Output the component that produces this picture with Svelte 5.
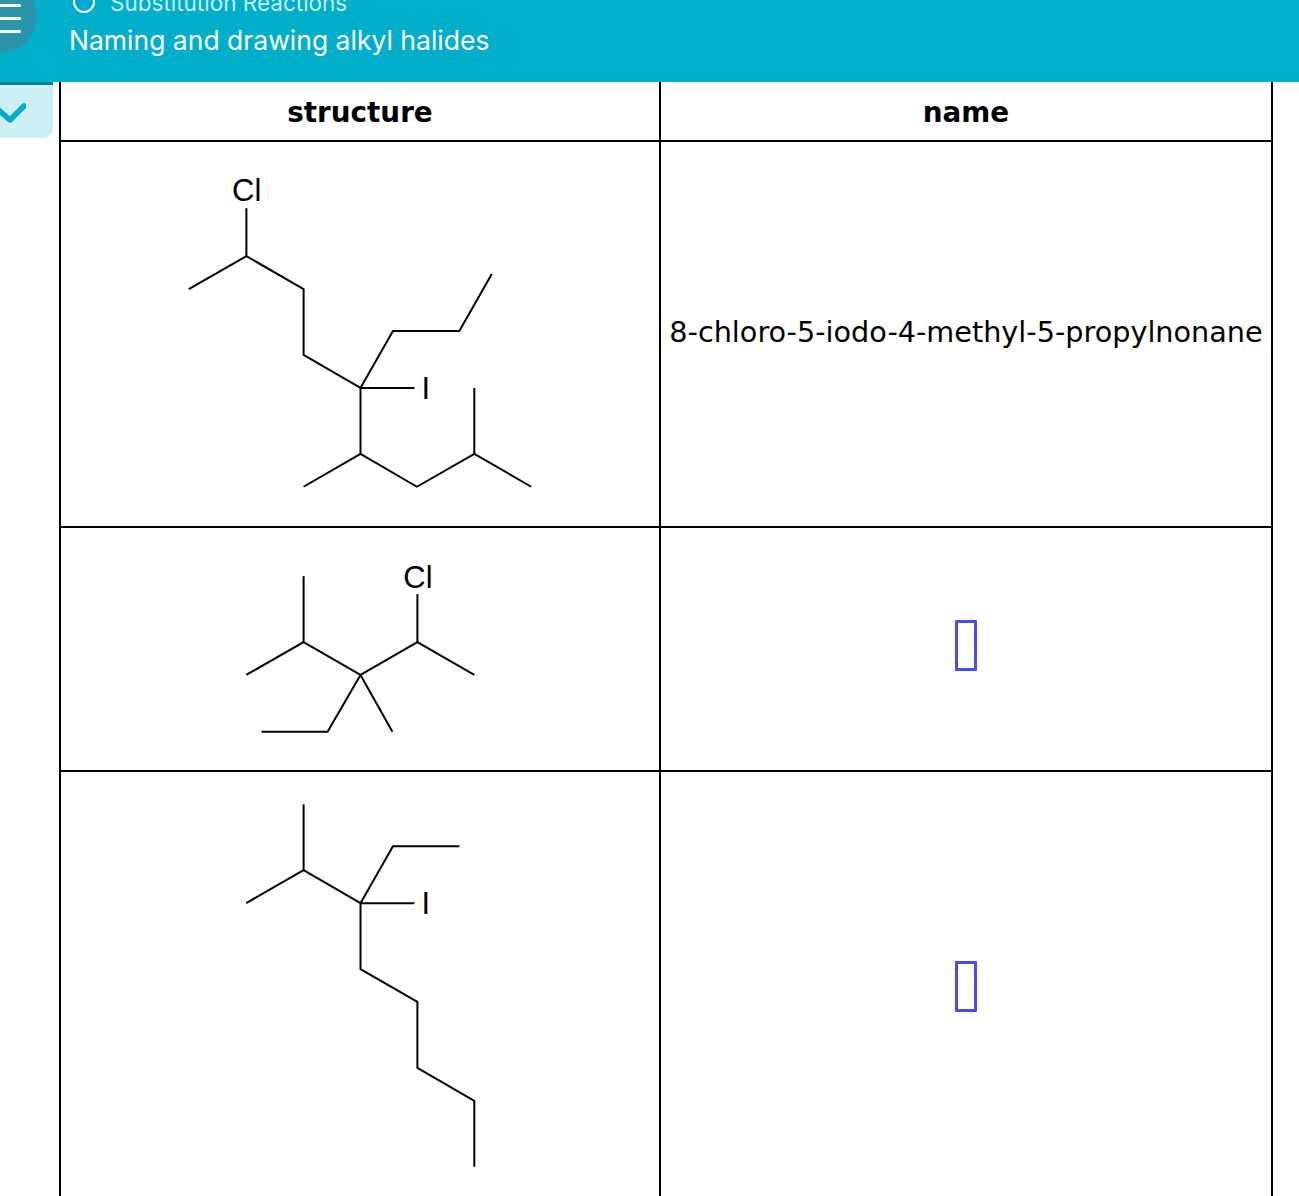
<script>
  const rows = [
    {
      height: 384,
      view: "61 142 599 384",
      lines: [
        "246.7,208 246.7,256",
        "189,289 246.7,256 304,289 304,355 361,388 393.5,331 460,331 492.5,274",
        "361,388 415,388",
        "361,388 361,454",
        "304,487 361,454 417.5,487 475,454 532,487",
        "475,454 475,388"
      ],
      labels: [{ text: "Cl", x: 247, y: 201 }, { text: "I", x: 426.5, y: 399 }],
      name: "8-chloro-5-iodo-4-methyl-5-propylnonane"
    },
    {
      height: 242,
      view: "61 528 599 242",
      lines: [
        "418,594 418,642",
        "246.5,675 304,642 361,675 418,642 475,675",
        "304,642 304,576",
        "262,732 328,732 361,675 393,732"
      ],
      labels: [{ text: "Cl", x: 418.5, y: 588 }]
    },
    {
      height: 435,
      view: "61 772 599 435",
      lines: [
        "304,804 304,870",
        "246.5,903 304,870 361,903 393.5,846 460,846",
        "361,903 415,903",
        "361,903 361,969 418,1002 418,1068 475,1101 475,1167"
      ],
      labels: [{ text: "I", x: 426.5, y: 914 }]
    }
  ];
</script>

<div class="page">
  <header class="topbar">
    <div class="menu">
      <span></span><span></span><span></span>
    </div>
    <div class="titles">
      <div class="section"><i class="dot"></i>Substitution Reactions</div>
      <div class="title">Naming and drawing alkyl halides</div>
    </div>
  </header>

  <div class="content">
    <div class="tab">
      <svg width="26" height="20" viewBox="0 0 26 20">
        <path d="M-6 3 L10 17 L24 3" fill="none" stroke="#00aeca" stroke-width="5.5" stroke-linecap="round" stroke-linejoin="round" />
      </svg>
    </div>

    <div class="table">
      <div class="cell head">structure</div>
      <div class="cell head last">name</div>
      {#each rows as row}
        <div class="cell" style="height: {row.height}px">
          <svg class="mol" viewBox={row.view} width="599" height={row.height}>
            {#each row.lines as pts}
              <polyline points={pts} />
            {/each}
            {#each row.labels as l}
              <text x={l.x} y={l.y}>{l.text}</text>
            {/each}
          </svg>
        </div>
        <div class="cell last answer">
          {#if row.name}
            <span class="answer-text">{row.name}</span>
          {:else}
            <span class="blank"></span>
          {/if}
        </div>
      {/each}
    </div>
  </div>
</div>

<style>
  :global(body) {
    margin: 0;
    background: #fff;
  }

  .page {
    height: 1196px;
    overflow: hidden;
    position: relative;
  }

  .topbar {
    height: 82px;
    background: #00aeca;
    color: #fff;
    position: relative;
    overflow: hidden;
  }

  .menu {
    position: absolute;
    left: -37px;
    top: -21px;
    width: 74px;
    height: 74px;
    border-radius: 50%;
    background: #2a95a8;
    display: flex;
    flex-direction: column;
    align-items: flex-end;
    gap: 10px;
    padding: 25px 16px 0 0;
    box-sizing: border-box;
  }

  .menu span {
    width: 37px;
    height: 3px;
    background: #fff;
    border-radius: 2px;
  }

  .titles {
    display: flex;
    flex-direction: column;
    margin-left: 69px;
    font-family: Inter, Lato, sans-serif;
  }

  .section {
    height: 24px;
    margin-top: -10px;
    display: flex;
    align-items: center;
    font-size: 22.5px;
    color: #c4eef4;
  }

  .dot {
    width: 18px;
    height: 18px;
    border: 2px solid #fff;
    border-radius: 50%;
    margin: 0 15px 0 4px;
    background: #05a8d0;
  }

  .title {
    margin-top: 9px;
    font-size: 26.5px;
    line-height: 34px;
  }

  .content {
    display: flex;
    align-items: flex-start;
  }

  .tab {
    width: 53px;
    height: 56px;
    margin-right: 6px;
    box-sizing: border-box;
    background: #ccf0f5;
    border-top: 3px solid #0a7f92;
    border-radius: 0 0 10px 0;
    padding-top: 18px;
    flex: none;
  }

  .tab svg {
    display: block;
  }

  .table {
    display: grid;
    grid-template-columns: 600px 612px;
    width: 1214px;
    border-left: 2px solid #000;
    font-family: "DejaVu Sans", Verdana, sans-serif;
    color: #000;
  }

  .cell {
    border-right: 2px solid #000;
    border-bottom: 2px solid #000;
    display: flex;
    align-items: center;
    justify-content: center;
    min-width: 0;
  }

  .head {
    height: 58px;
    padding-top: 2px;
    box-sizing: content-box;
    height: 56px;
    font-weight: 700;
    font-size: 27.8px;
  }

  .answer {
    font-size: 28.7px;
  }

  .answer-text {
    margin-top: -4px;
    white-space: nowrap;
  }

  .mol {
    display: block;
  }

  .mol polyline {
    fill: none;
    stroke: #000;
    stroke-width: 2;
    stroke-linejoin: round;
  }

  .mol text {
    font-family: "Liberation Sans", Arial, sans-serif;
    font-size: 31px;
    text-anchor: middle;
    fill: #000;
  }

  .blank {
    display: block;
    width: 16px;
    height: 45px;
    border: 3px solid #4a4af5;
    border-radius: 1px;
    margin-top: -7px;
    margin-left: -1px;
  }
</style>
